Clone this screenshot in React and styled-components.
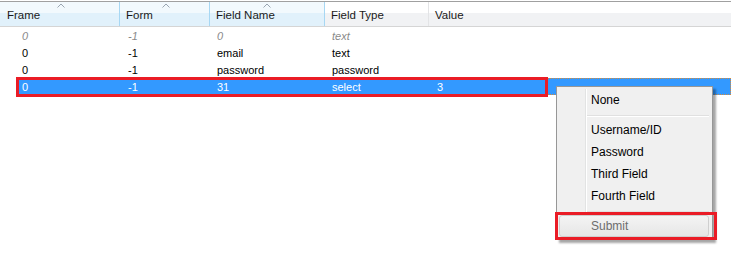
import React from "react";
import styled, { createGlobalStyle } from "styled-components";

const Global = createGlobalStyle`
  html, body { margin: 0; padding: 0; background: #ffffff; }
  body { font-family: "Liberation Sans", Arial, sans-serif; font-size: 11px; color: #000; }
`;

const COLS = [120, 90, 115, 104, 101];

const Page = styled.div`
  position: relative;
  width: 731px;
  height: 256px;
  overflow: hidden;
  background: #fff;
  border-top: 1px solid #a0a0a0;
  box-sizing: border-box;
  margin-top: 1px;
`;

const Header = styled.div`
  display: flex;
  height: 24px;
  border-bottom: 1px solid #d5d5d5;
  background: linear-gradient(#ffffff 0%, #ffffff 45%, #f1f2f4 46%, #f1f2f4 100%);
`;

const HeadCell = styled.div`
  position: relative;
  box-sizing: border-box;
  width: ${(p) => p.$w}px;
  flex: ${(p) => (p.$fill ? "1" : "none")};
  display: flex;
  align-items: center;
  padding-left: ${(p) => p.$pad}px;
  border-right: ${(p) => (p.$fill ? "none" : `1px solid ${p.$sorted || p.$blueEdge ? "#a7d7f3" : "#e3e4e6"}`)};
  background: ${(p) =>
    p.$sorted
      ? "linear-gradient(#f2f9fd 0%, #f2f9fd 45%, #e1f1fb 46%, #e1f1fb 100%)"
      : "transparent"};
  color: #1a1a1a;
  font-size: 11.5px;
  padding-top: 2px;
`;

const SortArrow = styled.svg`
  position: absolute;
  top: 1px;
  left: ${(p) => p.$x}px;
  width: 8px;
  height: 5px;
`;

const Rows = styled.div`
  display: flex;
  flex-direction: column;
`;

const Row = styled.div`
  display: flex;
  height: 17px;
  margin-left: 18px;
  box-sizing: border-box;
  align-items: center;
  background: ${(p) => (p.$selected ? "#3399ff" : "transparent")};
  border: 1px ${(p) => (p.$selected ? "dotted #d48a3a" : "solid transparent")};
  color: ${(p) => (p.$selected ? "#ffffff" : p.$muted ? "#8a8a8a" : "#000000")};
  font-style: ${(p) => (p.$muted ? "italic" : "normal")};
`;

const Cell = styled.div`
  box-sizing: border-box;
  width: ${(p) => p.$w}px;
  flex: ${(p) => (p.$fill ? "1" : "none")};
  padding-left: ${(p) => p.$pad}px;
  white-space: nowrap;
`;

const Annotation = styled.div`
  position: absolute;
  left: ${(p) => p.$x}px;
  top: ${(p) => p.$y}px;
  width: ${(p) => p.$w}px;
  height: ${(p) => p.$h}px;
  border: 3px solid #ea1c26;
  box-sizing: border-box;
  pointer-events: none;
  z-index: 3;
`;

const Menu = styled.div`
  position: absolute;
  left: 556px;
  top: 84px;
  width: 157px;
  box-sizing: border-box;
  background: #f0f0f0;
  border: 1px solid #979797;
  padding: 2px;
  box-shadow: 3px 3px 2px rgba(0, 0, 0, 0.35);
  display: flex;
  flex-direction: column;
  z-index: 2;
  &::before {
    content: "";
    position: absolute;
    left: 28px;
    top: 2px;
    bottom: 2px;
    width: 1px;
    background: #e2e3e3;
    box-shadow: 1px 0 0 #ffffff;
  }
`;

const Item = styled.div`
  position: relative;
  height: 22px;
  display: flex;
  align-items: center;
  padding-left: 31px;
  font-size: 12px;
  color: ${(p) => (p.$disabled ? "#6d6d6d" : "#000000")};
  box-sizing: border-box;
  border-radius: 3px;
  border: 1px solid ${(p) => (p.$hover ? "#cfcfcf" : "transparent")};
  background: ${(p) => (p.$hover ? "linear-gradient(#f4f4f4, #e6e6e6)" : "transparent")};
  margin: 0 1px 0 0;
`;

const Separator = styled.div`
  height: 8px;
  display: flex;
  align-items: center;
  padding-left: 28px;
  &::after {
    content: "";
    flex: 1;
    height: 1px;
    background: #e0e0e0;
    box-shadow: 0 1px 0 #ffffff;
    margin-right: 1px;
  }
`;

const headers = [
  { label: "Frame", sorted: true, arrow: 57 },
  { label: "Form", sorted: true, arrow: 42 },
  { label: "Field Name", sorted: true, arrow: 53 },
  { label: "Field Type" },
  { label: "Value" },
];

const rows = [
  { cells: ["0", "-1", "0", "text", ""], muted: true },
  { cells: ["0", "-1", "email", "text", ""] },
  { cells: ["0", "-1", "password", "password", ""] },
  { cells: ["0", "-1", "31", "select", "3"], selected: true },
];

const rowCols = [102, 90, 115, 104, 0];
const rowPads = [3, 7, 6, 6, 7];

const Arrow = ({ x }) => (
  <SortArrow $x={x} viewBox="0 0 8 5">
    <path d="M0.5 4.5 L4 1 L7.5 4.5" fill="none" stroke="#9aa5b1" strokeWidth="1" />
  </SortArrow>
);

export default function App() {
  return (
    <>
      <Global />
      <Page>
        <Header>
          {headers.map((h, i) => (
            <HeadCell
              key={h.label}
              $w={COLS[i]}
              $fill={i === 4}
              $sorted={h.sorted}
              $blueEdge={i === 2}
              $pad={i === 0 ? 7 : 6}
            >
              {h.label}
              {h.arrow ? <Arrow x={h.arrow} /> : null}
            </HeadCell>
          ))}
          <HeadCell $fill $w={0} $pad={0} />
        </Header>
        <Rows>
          {rows.map((r, ri) => (
            <Row key={ri} $selected={r.selected} $muted={r.muted}>
              {r.cells.map((c, ci) => (
                <Cell key={ci} $w={rowCols[ci]} $fill={ci === 4} $pad={rowPads[ci]}>
                  {c}
                </Cell>
              ))}
            </Row>
          ))}
        </Rows>
        <Annotation $x={16} $y={75} $w={532} $h={20} />
        <Menu>
          <Item>None</Item>
          <Separator />
          <Item>Username/ID</Item>
          <Item>Password</Item>
          <Item>Third Field</Item>
          <Item>Fourth Field</Item>
          <Separator />
          <Item $disabled $hover>Submit</Item>
        </Menu>
        <Annotation $x={555} $y={210} $w={162} $h={28} />
      </Page>
    </>
  );
}
